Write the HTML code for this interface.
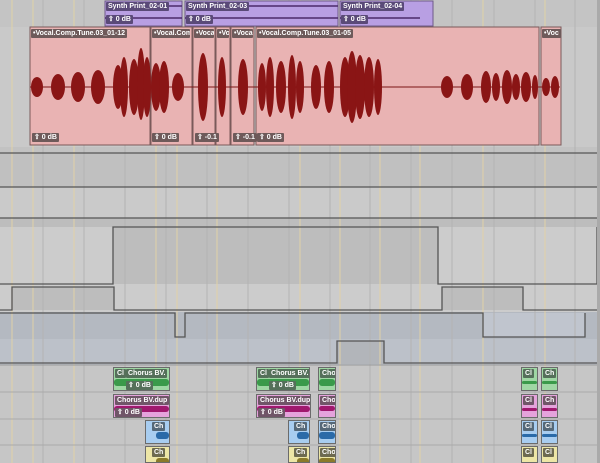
<!DOCTYPE html>
<html><head><meta charset="utf-8"><style>
*{margin:0;padding:0;box-sizing:border-box}
body{width:600px;height:463px;overflow:hidden;background:#c9c9c9;position:relative;font-family:"Liberation Sans",sans-serif}
.a{position:absolute}
.lbl{position:absolute;background:#6e5a5a;color:#fff;font-size:7px;font-weight:bold;padding:0 2px;line-height:9px;border-radius:1px;white-space:nowrap;overflow:hidden}
.clip{position:absolute;border:1px solid #6b6b6b;overflow:hidden}
.w{position:absolute;left:0;right:0;top:11px;height:7px;border-radius:3px}
</style></head><body>
<svg class="a" style="left:0;top:0" width="600" height="463">
 <rect x="0" y="0" width="600" height="27" fill="#c4c4c4"/>
 <rect x="0" y="147" width="600" height="6" fill="#c2c2c2"/>
 <rect x="0" y="153" width="600" height="34" fill="#c0c0c0"/>
 <rect x="0" y="187" width="600" height="31" fill="#cacaca"/>
 <rect x="0" y="218" width="600" height="9" fill="#bdbdbd"/>
 <rect x="0" y="227" width="600" height="58" fill="#cccccc"/>
 <rect x="113" y="227" width="325" height="57" fill="#bdbdbd"/>
 <rect x="0" y="285" width="600" height="27" fill="#cccccc"/>
 <rect x="12" y="287" width="102" height="23" fill="#bdbdbd"/>
 <rect x="442" y="287" width="81" height="23" fill="#bdbdbd"/>
 <rect x="0" y="312" width="600" height="27" fill="#b4b9c1"/>
 <rect x="483" y="313" width="102" height="24" fill="#c0c5ce"/>
 <rect x="0" y="339" width="600" height="26" fill="#bcc1c9"/>
 <rect x="337" y="341" width="47" height="23" fill="#b2b5ba"/>
 <rect x="0" y="365" width="600" height="98" fill="#c6c6c6"/>
 <g stroke="#b3b3b3" stroke-width="1">
  <line x1="43" y1="0" x2="43" y2="463"/><line x1="84" y1="0" x2="84" y2="463"/><line x1="125" y1="0" x2="125" y2="463"/><line x1="166" y1="0" x2="166" y2="463"/><line x1="207" y1="0" x2="207" y2="463"/><line x1="248" y1="0" x2="248" y2="463"/><line x1="289" y1="0" x2="289" y2="463"/><line x1="330" y1="0" x2="330" y2="463"/><line x1="370" y1="0" x2="370" y2="463"/><line x1="411" y1="0" x2="411" y2="463"/><line x1="452" y1="0" x2="452" y2="463"/><line x1="494" y1="0" x2="494" y2="463"/><line x1="535" y1="0" x2="535" y2="463"/><line x1="575" y1="0" x2="575" y2="463"/>
 </g>
 <g stroke="#e3d3a6" stroke-width="1.2" opacity=".8">
  <line x1="12" y1="0" x2="12" y2="463"/><line x1="33" y1="0" x2="33" y2="463"/><line x1="74" y1="0" x2="74" y2="463"/><line x1="156" y1="0" x2="156" y2="463"/><line x1="177" y1="0" x2="177" y2="463"/><line x1="217" y1="0" x2="217" y2="463"/><line x1="300" y1="0" x2="300" y2="463"/><line x1="340" y1="0" x2="340" y2="463"/><line x1="380" y1="0" x2="380" y2="463"/><line x1="420" y1="0" x2="420" y2="463"/><line x1="483" y1="0" x2="483" y2="463"/><line x1="545" y1="0" x2="545" y2="463"/>
 </g>
 <g stroke="#555" stroke-width="1.3" fill="none">
  <line x1="0" y1="153" x2="597" y2="153"/>
  <line x1="0" y1="187" x2="597" y2="187"/>
  <line x1="0" y1="218" x2="597" y2="218"/>
  <polyline points="0,284 113,284 113,227 438,227 438,284 597,284 597,227"/>
  <polyline points="0,310 12,310 12,287 114,287 114,310 442,310 442,287 523,287 523,310 600,310"/>
  <polyline points="0,313 175,313 175,337 185,337 185,313 483,313 483,337 585,337 585,313"/>
  <polyline points="0,363 337,363 337,341 384,341 384,363 600,363"/>
  <line x1="0" y1="365" x2="600" y2="365" stroke="#999" stroke-width="1"/>
  <line x1="0" y1="392" x2="600" y2="392" stroke="#aaa" stroke-width="1"/>
  <line x1="0" y1="419" x2="600" y2="419" stroke="#aaa" stroke-width="1"/>
  <line x1="0" y1="445" x2="600" y2="445" stroke="#aaa" stroke-width="1"/>
 </g>
 <g fill="#b89fe3" stroke="#6e5a8a">
  <rect x="105" y="1" width="77" height="25"/><rect x="185" y="1" width="153" height="25"/><rect x="340" y="1" width="93" height="25"/>
 </g>
 <g stroke="#4a2a6a" stroke-width="1.5"><line x1="105" y1="18" x2="182" y2="18"/><line x1="185" y1="18" x2="338" y2="18"/><line x1="340" y1="18" x2="420" y2="18"/><line x1="150" y1="6" x2="182" y2="6"/><line x1="240" y1="6" x2="338" y2="6"/></g>
 <g fill="#e9b3b3" stroke="#7a5a5a">
  <rect x="30" y="27" width="120" height="118"/><rect x="151" y="27" width="41" height="118"/><rect x="193" y="27" width="22" height="118"/><rect x="216" y="27" width="14" height="118"/><rect x="231" y="27" width="23" height="118"/><rect x="256" y="27" width="283" height="118"/><rect x="541" y="27" width="20" height="118"/>
 </g>
 <line x1="30" y1="87" x2="560" y2="87" stroke="#7a1515" stroke-width="1"/>
 <g fill="#8a1515">
  <ellipse cx="37" cy="87" rx="6" ry="10"/><ellipse cx="58" cy="87" rx="7" ry="13"/><ellipse cx="78" cy="87" rx="7" ry="15"/><ellipse cx="98" cy="87" rx="7" ry="17"/>
  <ellipse cx="118" cy="87" rx="5" ry="22"/><ellipse cx="124" cy="87" rx="4" ry="30"/><ellipse cx="134" cy="87" rx="5" ry="28"/><ellipse cx="141" cy="84" rx="4" ry="36"/><ellipse cx="147" cy="87" rx="4" ry="30"/>
  <ellipse cx="156" cy="87" rx="5" ry="24"/><ellipse cx="164" cy="87" rx="5" ry="26"/><ellipse cx="178" cy="87" rx="6" ry="14"/>
  <ellipse cx="203" cy="87" rx="5" ry="34"/><ellipse cx="222" cy="87" rx="4" ry="30"/><ellipse cx="243" cy="87" rx="5" ry="28"/>
  <ellipse cx="262" cy="87" rx="4" ry="24"/><ellipse cx="270" cy="87" rx="4" ry="30"/><ellipse cx="281" cy="87" rx="5" ry="26"/><ellipse cx="292" cy="87" rx="4" ry="32"/><ellipse cx="300" cy="87" rx="4" ry="26"/><ellipse cx="316" cy="87" rx="5" ry="22"/><ellipse cx="329" cy="87" rx="5" ry="26"/>
  <ellipse cx="345" cy="87" rx="5" ry="30"/><ellipse cx="352" cy="87" rx="5" ry="36"/><ellipse cx="360" cy="87" rx="5" ry="32"/><ellipse cx="369" cy="87" rx="5" ry="30"/><ellipse cx="378" cy="87" rx="4" ry="28"/>
  <ellipse cx="447" cy="87" rx="6" ry="11"/><ellipse cx="467" cy="87" rx="6" ry="13"/><ellipse cx="486" cy="87" rx="5" ry="16"/><ellipse cx="496" cy="87" rx="4" ry="14"/><ellipse cx="507" cy="87" rx="5" ry="17"/><ellipse cx="516" cy="87" rx="4" ry="13"/><ellipse cx="526" cy="87" rx="5" ry="15"/><ellipse cx="535" cy="87" rx="3" ry="12"/><ellipse cx="546" cy="87" rx="4" ry="9"/><ellipse cx="555" cy="87" rx="4" ry="11"/>
 </g>
 <rect x="597" y="0" width="3" height="463" fill="#aaa"/>
</svg>
<div class="lbl" style="left:106px;top:2px;background:#5a4a78">Synth Print_02-01</div>
<div class="lbl" style="left:186px;top:2px;background:#5a4a78">Synth Print_02-03</div>
<div class="lbl" style="left:341px;top:2px;background:#5a4a78">Synth Print_02-04</div>
<div class="lbl" style="left:106px;top:15px;background:#5a4a78">⇧ 0 dB</div>
<div class="lbl" style="left:186px;top:15px;background:#5a4a78">⇧ 0 dB</div>
<div class="lbl" style="left:341px;top:15px;background:#5a4a78">⇧ 0 dB</div>
<div class="lbl" style="left:31px;top:29px">•Vocal.Comp.Tune.03_01-12</div>
<div class="lbl" style="left:152px;top:29px;max-width:38px">•Vocal.Comp</div>
<div class="lbl" style="left:194px;top:29px;max-width:20px">•Voca</div>
<div class="lbl" style="left:217px;top:29px;max-width:12px">•Vo</div>
<div class="lbl" style="left:232px;top:29px;max-width:21px">•Vocal</div>
<div class="lbl" style="left:257px;top:29px">•Vocal.Comp.Tune.03_01-05</div>
<div class="lbl" style="left:542px;top:29px">•Voc</div>
<div class="lbl" style="left:32px;top:133px">⇧ 0 dB</div>
<div class="lbl" style="left:152px;top:133px">⇧ 0 dB</div>
<div class="lbl" style="left:195px;top:133px">⇧ -0.1</div>
<div class="lbl" style="left:233px;top:133px">⇧ -0.1</div>
<div class="lbl" style="left:257px;top:133px">⇧ 0 dB</div>
<div class="clip" style="left:113px;top:367px;width:57px;height:24px;background:#9fd7a4"><div class="w" style="background:#3a9a4a"></div><div class="lbl" style="left:1px;top:1px;background:#55705a">Cl</div><div class="lbl" style="left:12px;top:1px;background:#55705a">Chorus BV.</div><div class="lbl" style="left:12px;top:13px;background:#55705a">⇧ 0 dB</div></div>
<div class="clip" style="left:256px;top:367px;width:54px;height:24px;background:#9fd7a4"><div class="w" style="background:#3a9a4a"></div><div class="lbl" style="left:1px;top:1px;background:#55705a">Cl</div><div class="lbl" style="left:12px;top:1px;background:#55705a">Chorus BV.</div><div class="lbl" style="left:12px;top:13px;background:#55705a">⇧ 0 dB</div></div>
<div class="clip" style="left:318px;top:367px;width:18px;height:24px;background:#9fd7a4"><div class="w" style="background:#3a9a4a"></div><div class="lbl" style="left:1px;top:1px;background:#55705a">Chor</div></div>
<div class="clip" style="left:521px;top:367px;width:17px;height:24px;background:#9fd7a4"><div class="w" style="background:#3a9a4a;height:3px;top:13px"></div><div class="lbl" style="left:1px;top:1px;background:#55705a">Cl</div></div>
<div class="clip" style="left:541px;top:367px;width:17px;height:24px;background:#9fd7a4"><div class="w" style="background:#3a9a4a;height:3px;top:13px"></div><div class="lbl" style="left:1px;top:1px;background:#55705a">Ch</div></div>
<div class="clip" style="left:113px;top:394px;width:57px;height:24px;background:#e5a3dc"><div class="w" style="background:#a0186e;height:6px"></div><div class="lbl" style="left:1px;top:1px;background:#705568">Chorus BV.dup</div><div class="lbl" style="left:1px;top:13px;background:#705568">⇧ 0 dB</div></div>
<div class="clip" style="left:256px;top:394px;width:55px;height:24px;background:#e5a3dc"><div class="w" style="background:#a0186e;height:6px"></div><div class="lbl" style="left:1px;top:1px;background:#705568">Chorus BV.dup</div><div class="lbl" style="left:1px;top:13px;background:#705568">⇧ 0 dB</div></div>
<div class="clip" style="left:318px;top:394px;width:18px;height:24px;background:#e5a3dc"><div class="w" style="background:#a0186e;height:5px"></div><div class="lbl" style="left:1px;top:1px;background:#705568">Chor</div></div>
<div class="clip" style="left:521px;top:394px;width:17px;height:24px;background:#e5a3dc"><div class="w" style="background:#a0186e;height:3px;top:13px"></div><div class="lbl" style="left:1px;top:1px;background:#705568">Cl</div></div>
<div class="clip" style="left:541px;top:394px;width:17px;height:24px;background:#e5a3dc"><div class="w" style="background:#a0186e;height:3px;top:13px"></div><div class="lbl" style="left:1px;top:1px;background:#705568">Ch</div></div>
<div class="clip" style="left:145px;top:420px;width:25px;height:24px;background:#a8cdf0"><div class="w" style="left:10px;background:#2a6aa8"></div><div class="lbl" style="left:6px;top:1px;background:#556878">Ch</div></div>
<div class="clip" style="left:288px;top:420px;width:22px;height:24px;background:#a8cdf0"><div class="w" style="left:8px;background:#2a6aa8"></div><div class="lbl" style="left:5px;top:1px;background:#556878">Ch</div></div>
<div class="clip" style="left:318px;top:420px;width:18px;height:24px;background:#a8cdf0"><div class="w" style="background:#2a6aa8"></div><div class="lbl" style="left:1px;top:1px;background:#556878">Chor</div></div>
<div class="clip" style="left:521px;top:420px;width:17px;height:24px;background:#a8cdf0"><div class="w" style="background:#2a6aa8;height:3px;top:13px"></div><div class="lbl" style="left:1px;top:1px;background:#556878">Cl</div></div>
<div class="clip" style="left:541px;top:420px;width:17px;height:24px;background:#a8cdf0"><div class="w" style="background:#2a6aa8;height:3px;top:13px"></div><div class="lbl" style="left:1px;top:1px;background:#556878">Cl</div></div>
<div class="clip" style="left:145px;top:446px;width:25px;height:17px;background:#ede6a6"><div class="w" style="left:10px;background:#8a7a2a"></div><div class="lbl" style="left:6px;top:1px;background:#6d6a50">Ch</div></div>
<div class="clip" style="left:288px;top:446px;width:22px;height:17px;background:#ede6a6"><div class="w" style="left:8px;background:#8a7a2a"></div><div class="lbl" style="left:5px;top:1px;background:#6d6a50">Ch</div></div>
<div class="clip" style="left:318px;top:446px;width:18px;height:17px;background:#ede6a6"><div class="w" style="background:#8a7a2a"></div><div class="lbl" style="left:1px;top:1px;background:#6d6a50">Chor</div></div>
<div class="clip" style="left:521px;top:446px;width:17px;height:17px;background:#ede6a6"><div class="lbl" style="left:1px;top:1px;background:#6d6a50">Cl</div></div>
<div class="clip" style="left:541px;top:446px;width:17px;height:17px;background:#ede6a6"><div class="lbl" style="left:1px;top:1px;background:#6d6a50">Cl</div></div>
</body></html>
